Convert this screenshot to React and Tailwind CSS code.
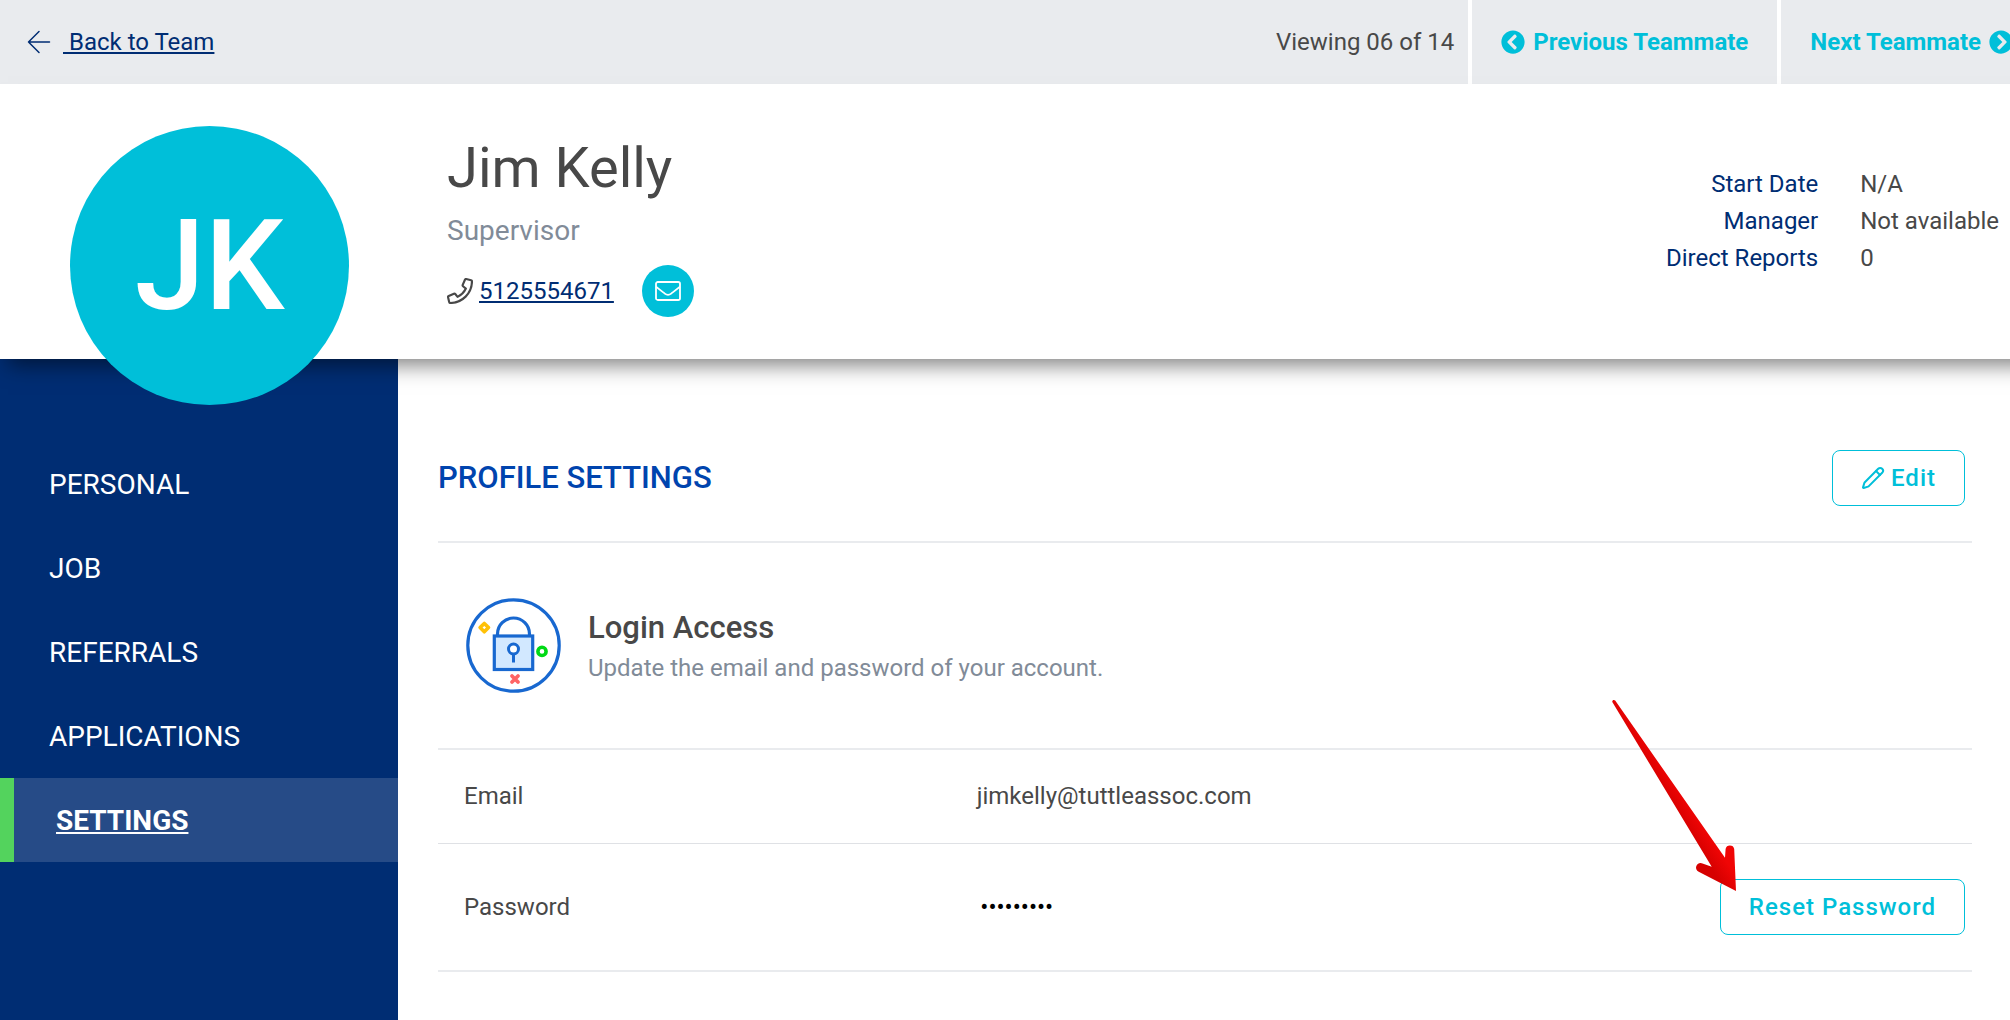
import { FaChevronCircleLeft, FaChevronCircleRight } from "react-icons/fa";
import { Pencil } from "lucide-react";

const NAV_ITEMS = ["PERSONAL", "JOB", "REFERRALS", "APPLICATIONS", "SETTINGS"];

const DETAILS = [
    { label: "Start Date", value: "N/A" },
    { label: "Manager", value: "Not available" },
    { label: "Direct Reports", value: "0" }
];

/* ================= ICONS ================= */

function BackArrow() {
    return (
        <svg width="24" height="24" viewBox="0 0 24 24" fill="none" stroke="currentColor" strokeWidth="1.5" strokeLinecap="round" strokeLinejoin="round" aria-hidden="true">
            <path d="M12 1.5 1.5 12 12 22.5M1.5 12h21" />
        </svg>
    );
}

function PhoneIcon() {
    return (
        <svg width="26" height="26" viewBox="-22 -22 556 556" fill="none" stroke="currentColor" strokeWidth="46" strokeLinejoin="round" aria-hidden="true">
            <path d="M493.4 24.6l-104-24c-11.3-2.6-22.9 3.3-27.5 13.9l-48 112c-4.2 9.8-1.4 21.3 6.9 28l60.6 49.6c-36 76.7-98.9 140.5-177.2 177.2l-49.6-60.6c-6.8-8.3-18.2-11.1-28-6.9l-112 48C3.9 366.5-2 378.1.6 389.4l24 104C27.1 504.2 36.7 512 48 512c256.1 0 464-207.5 464-464 0-11.2-7.7-20.9-18.6-23.4z" />
        </svg>
    );
}

function MailIcon() {
    return (
        <svg width="26" height="20" viewBox="0 0 26 20" fill="none" stroke="currentColor" strokeWidth="1.8" strokeLinejoin="round" aria-hidden="true">
            <rect x="1" y="1" width="24" height="18" rx="1.8" />
            <path d="M1 5.6c3 2.5 6 4.8 8.8 7 2.200 1.700 4.200 1.700 6.400 0C19 10.400 22 8.100 25 5.600" />
        </svg>
    );
}

function LockIcon() {
    return (
        <svg width="95" height="95" viewBox="0 0 95 95" fill="none" className="shrink-0" aria-hidden="true">
            <circle cx="47.5" cy="47.5" r="45.7" stroke="#1868d0" strokeWidth="3.2" />
            <path d="M31.5 38v-2a16 16 0 0 1 32 0v2" stroke="#1868d0" strokeWidth="3.2" />
            <rect x="28.3" y="38" width="38.4" height="33.5" fill="#d2e8ff" stroke="#1868d0" strokeWidth="3.2" />
            <circle cx="47.5" cy="51" r="5" fill="#fff" stroke="#1868d0" strokeWidth="3" />
            <path d="M47.5 56v8.5" stroke="#1868d0" strokeWidth="3" />
            <path d="m18.3 25.4 4.200 4.200-4.200 4.200-4.200-4.200z" stroke="#ffc107" strokeWidth="3.6" strokeLinejoin="round" />
            <circle cx="76" cy="53.4" r="4.1" stroke="#00d915" strokeWidth="3.6" />
            <path d="m46 78 6 6m0-6-6 6" stroke="#ff6464" strokeWidth="3.8" strokeLinecap="round" />
        </svg>
    );
}

function PointerArrow() {
    return (
        <svg width="130" height="200" viewBox="0 0 130 200" className="pointer-events-none absolute -left-[110px] -top-[183px]" aria-hidden="true">
            <defs>
                <linearGradient id="pointer-fill" x1="58" y1="105" x2="72" y2="96" gradientUnits="userSpaceOnUse">
                    <stop offset="0" stopColor="#d60000" />
                    <stop offset="1" stopColor="#f00505" />
                </linearGradient>
            </defs>
            <path
                fill="url(#pointer-fill)"
                d="M2.300 6C2 4.300 3.800 3.300 5.200 4.600L115 161.700l.6-8.700a4.400 4.400 0 0 1 8.600 0L126 195 88.700 175.700a4.400 4.400 0 0 1 3.800-8.300l9.200 3.300z"
            />
        </svg>
    );
}

/* ================= SECTIONS ================= */

function TopBar() {
    return (
        <nav className="flex h-[84px] items-stretch bg-[#e9ebee] text-2xl">

            <a href="#team" className="flex flex-1 items-center gap-3 pl-[27px] text-[#002d73]">
                <BackArrow />
                <span className="underline">&nbsp;Back to Team</span>
            </a>

            <span className="flex items-center pr-3.5">Viewing 06 of 14</span>

            <button className="flex items-center gap-2 border-l-4 border-white px-[29px] font-bold text-[#00bfd9]">
                <FaChevronCircleLeft size={24} />
                Previous Teammate
            </button>

            <button className="flex items-center gap-2 border-l-4 border-white px-[29px] font-bold text-[#00bfd9]">
                Next Teammate
                <FaChevronCircleRight size={24} />
            </button>

        </nav>
    );
}

function ProfileHeader() {
    return (
        <header className="relative z-10 flex bg-white shadow-[0_14px_20px_-8px_rgba(0,0,0,0.5)]">

            {/* AVATAR */}
            <div className="w-[398px] shrink-0 pl-[70px] pt-[42px]">
                <div className="-mb-[46px] flex size-[279px] items-center justify-center rounded-full bg-[#00bfd9] text-[126px] font-medium leading-none text-white">
                    JK
                </div>
            </div>

            {/* NAME + CONTACT */}
            <div className="flex-1 pl-[49px] pt-[49px]">
                <h1 className="text-[56px] leading-[70px]">Jim Kelly</h1>
                <p className="mt-2 text-[28px] leading-10 text-[#818b98]">Supervisor</p>

                <div className="mt-3.5 flex items-center gap-7">
                    <div className="flex items-center gap-1.5">
                        <PhoneIcon />
                        <a href="tel:5125554671" className="text-2xl text-[#002d73] underline">5125554671</a>
                    </div>
                    <a href="mailto:jimkelly@tuttleassoc.com" aria-label="Email Jim Kelly" className="flex size-[52px] items-center justify-center rounded-full bg-[#00bfd9] text-white">
                        <MailIcon />
                    </a>
                </div>
            </div>

            {/* DETAILS */}
            <dl className="grid grid-cols-[auto_auto] content-start gap-x-[42px] pr-[43px] pt-[82px] text-2xl leading-[37px]">
                {DETAILS.map((item) => (
                    <div key={item.label} className="contents">
                        <dt className="text-right text-[#002d73]">{item.label}</dt>
                        <dd>{item.value}</dd>
                    </div>
                ))}
            </dl>

        </header>
    );
}

function Sidebar() {
    return (
        <aside className="w-[398px] shrink-0 bg-[#002d73] pt-[83px]">
            {NAV_ITEMS.map((item) => (
                <a
                    key={item}
                    href={`#${item.toLowerCase()}`}
                    className={`flex h-[84px] items-center pt-0.5 text-[28px] text-white ${item === "SETTINGS"
                        ? "border-l-[14px] border-[#53d35d] bg-[#264b87] pl-[42px] font-bold underline"
                        : "pl-[49px]"}`}
                >
                    {item}
                </a>
            ))}
        </aside>
    );
}

function OutlineButton({ children }) {
    return (
        <button className="flex h-14 items-center gap-1.5 rounded-lg border border-[#00bfd9] bg-white px-7 text-2xl font-medium tracking-[1px] text-[#00bfd9]">
            {children}
        </button>
    );
}

function Settings() {
    return (
        <main className="flex-1 pl-10 pr-[70px] pt-[91px] text-2xl">

            <div className="flex items-center justify-between border-b-2 border-[#e9ebee] pb-[35px] pr-[7px]">
                <h2 className="text-[31px] font-medium leading-10 text-[#0044ae]">PROFILE SETTINGS</h2>
                <OutlineButton>
                    <Pencil size={24} strokeWidth={2} />
                    Edit
                </OutlineButton>
            </div>

            <div className="flex items-center gap-[27px] border-b-2 border-[#e9ebee] px-7 py-[55px]">
                <LockIcon />
                <div>
                    <h3 className="text-[31px] font-medium leading-[44px]">Login Access</h3>
                    <p className="leading-9 text-[#818b98]">Update the email and password of your account.</p>
                </div>
            </div>

            <div className="flex items-center border-b border-[#dfe1e5] py-7 pl-[26px] leading-[37px]">
                <span className="w-[34%]">Email</span>
                <span>jimkelly@tuttleassoc.com</span>
            </div>

            <div className="flex items-center border-b-2 border-[#e9ebee] py-[35px] pl-[26px] pr-[7px]">
                <label htmlFor="password" className="w-[34%]">Password</label>
                <input
                    id="password"
                    type="password"
                    value="secret123"
                    readOnly
                    className="min-w-0 flex-1 pl-1.5 text-black outline-none"
                />
                <div className="relative">
                    <OutlineButton>Reset Password</OutlineButton>
                    <PointerArrow />
                </div>
            </div>

        </main>
    );
}

export default function App() {
    return (
        <div className="min-h-screen overflow-x-hidden bg-white font-['Roboto',sans-serif] text-[#484848]">
            <div className="flex min-h-screen w-[calc(100%+32px)] flex-col">
                <TopBar />
                <ProfileHeader />
                <div className="flex flex-1">
                    <Sidebar />
                    <Settings />
                </div>
            </div>
        </div>
    );
}
